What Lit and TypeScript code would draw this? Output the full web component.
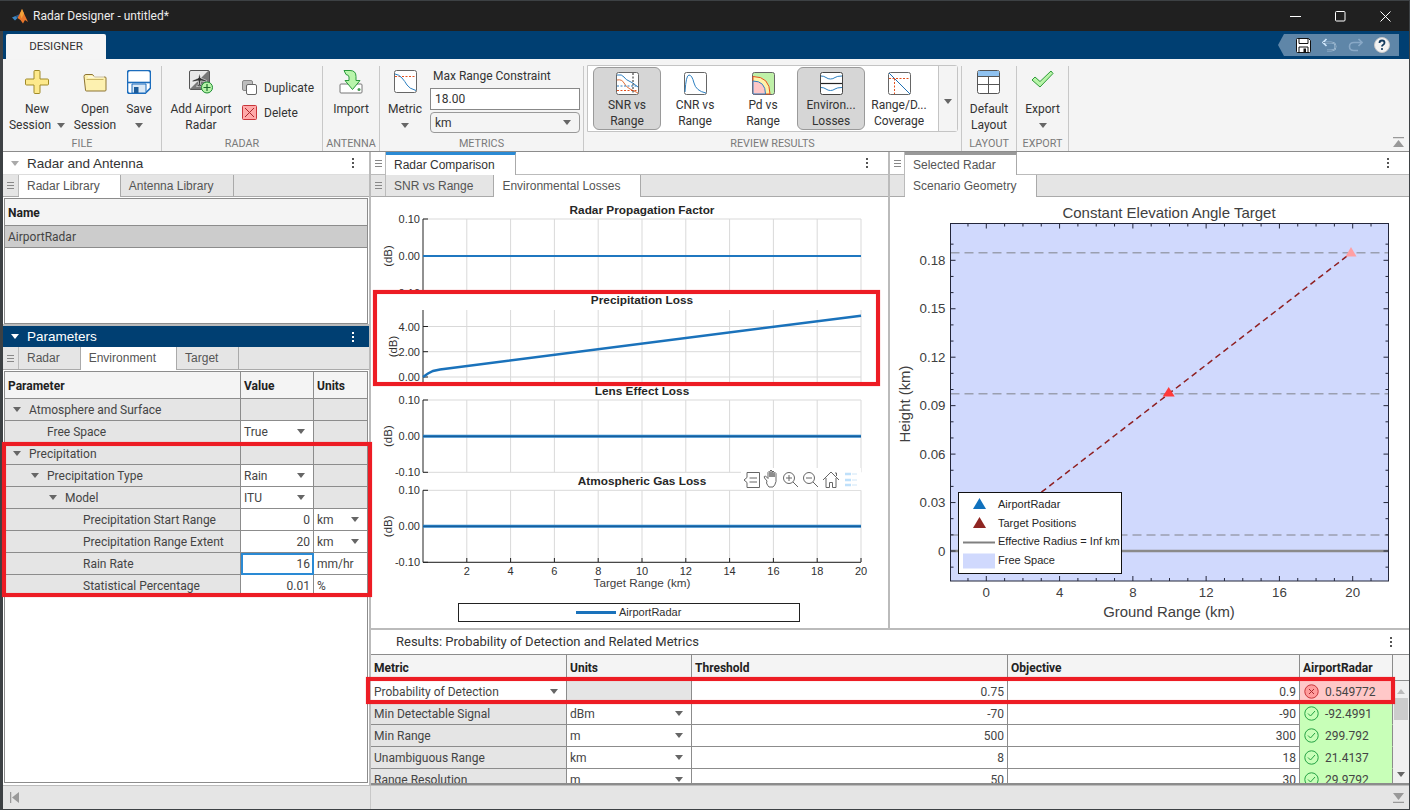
import { LitElement, html, svg, css } from 'lit';
import { customElement } from 'lit/decorators.js';

const icons = {
  plus: svg`<path d="M9 1.5q0-1 1-1h4q1 0 1 1V9h7.5q1 0 1 1v4q0 1-1 1H15v7.5q0 1-1 1h-4q-1 0-1-1V15H1.5q-1 0-1-1v-4q0-1 1-1H9z" fill="#fde98c" stroke="#a08a28"/>`,
  folder: svg`<path d="M1 6.5q0-2 2-2h6.5l2 2.5H22q1 0 1 1V20q0 1-1 1H3.500q-1 0-1-1z" fill="#fdf1b0" stroke="#8d7433"/><path d="M3.500 9.500h17" stroke="#c9b566" fill="none"/><path d="M5 7h16" stroke="#fff" fill="none"/>`,
  save: svg`<path d="M.5 3q0-2.500 2.500-2.500h18q2.500 0 2.500 2.500v15l-5.500 5.500H3q-2.500 0-2.500-2.500z" fill="#fff" stroke="#1c6dbd" stroke-width="1.600"/><path d="M1 12.500h22" stroke="#1c6dbd" stroke-width="1.600"/><path d="M5 14h14v9H5z" fill="#dbe9f6" stroke="#1c6dbd"/><path d="M7 17h4.500v6H7z" fill="#1c5b99"/>`,
  airport: svg`<rect x=".5" y=".5" width="20" height="19" rx="1.500" fill="#e8e8e8" stroke="#555"/><path d="M1 19 L19 1 H20 V19z" fill="#777"/><path d="M10.500 3l1.200 5 6 2.500v1.500l-6-1.200-.4 3.500 2 1.400v1l-2.800-.7-2.800.7v-1l2-1.400-.4-3.500-6 1.200v-1.500l6-2.500z" fill="#333" stroke="#fff" stroke-width=".6"/><circle cx="18" cy="17.500" r="5.500" fill="#b6f2a8" stroke="#1d8c34"/><path d="M18 14v7M14.500 17.500h7" stroke="#1d6c2c" stroke-width="1.200"/>`,
  dup: svg`<rect x=".5" y=".5" width="10" height="10" rx="1.500" fill="#bdbdbd" stroke="#888"/><rect x="4.500" y="4.500" width="10" height="10" rx="1.500" fill="#fff" stroke="#666"/>`,
  del: svg`<rect x=".5" y=".5" width="14" height="14" rx="1" fill="#ffa9a9" stroke="#c8353a"/><path d="M3 3l9 9M12 3l-9 9" stroke="#a92a2e"/>`,
  imp: svg`<path d="M2 14h20q1 0 1 1v7q0 1-1 1H2q-1 0-1-1v-7q0-1 1-1z" fill="#fff" stroke="#777"/><circle cx="20" cy="19.500" r="1.500" fill="#4a9a52"/><path d="M5 .5h6q6 0 6 6v4h4l-7.500 9-7.500-9h4V7q0-2-3-2.500z" fill="#b9f5ab" stroke="#2a9a3c" stroke-linejoin="round"/>`,
  metric: svg`<rect x=".5" y=".5" width="22" height="22" rx="2" fill="#fff" stroke="#666"/><path d="M1 6.500h21" stroke="#e2501e" stroke-dasharray="2 1.500"/><path d="M1 4q4 .500 7 4t5 7 9 5.500" fill="none" stroke="#2c7fc1"/>`,
  snr: svg`<rect x=".5" y=".5" width="22" height="22" rx="2" fill="#fff" stroke="#666"/><path d="M1 3q5-1 7 2t5 4 9 6" fill="none" stroke="#2c7fc1"/><path d="M1 8q5-1 7 3t6 6 8 4" fill="none" stroke="#e0703a"/><path d="M1 14h21" stroke="#2c7fc1" stroke-dasharray="2 1.500"/><path d="M1 18.500h21" stroke="#e2501e" stroke-dasharray="2 1.500"/><path d="M17 1v21" stroke="#222" stroke-dasharray="2 1.500"/>`,
  cnr: svg`<rect x=".5" y=".5" width="22" height="22" rx="2" fill="#fff" stroke="#666"/><path d="M1 20q1-17 4-17 3 0 5 8t12 10" fill="none" stroke="#2c7fc1"/>`,
  pd: svg`<rect x=".5" y=".5" width="22" height="22" rx="2" fill="#bff0a8" stroke="#666"/><path d="M1 4.500q17 0 17 17.500H1z" fill="#fff3a8" stroke="#e2501e"/><path d="M1 9q12.500 0 12.500 13H1z" fill="#ffc6c6" stroke="#2c7fc1"/>`,
  env: svg`<rect x=".5" y=".5" width="22" height="22" rx="2" fill="#fff" stroke="#444"/><path d="M1 11.500h21" stroke="#222" stroke-width="1.200"/><path d="M1 4q3 0 5 1.500t4.500 1.500 4.500-1.500 7-1.500" fill="none" stroke="#2c7fc1"/><path d="M1 15.500q3 0 5 1.500t4.500 1.500 4.500-1.500 7-1.500" fill="none" stroke="#2c7fc1"/>`,
  cov: svg`<rect x=".5" y=".5" width="22" height="22" rx="2" fill="#fff" stroke="#666"/><path d="M1 1l21 21" stroke="#1f6fb2"/><path d="M1 6.500h21M6.500 6.500V22" stroke="#e2501e" stroke-dasharray="2 1.500"/>`,
  layout: svg`<rect x=".5" y=".5" width="22" height="23" rx="2" fill="#fff" stroke="#555"/><path d="M1 1h21v5H1z" fill="#8fc2f0"/><path d="M1 6.500h21M1 14.500h21M11.500 6.500v17" stroke="#555"/>`,
  check: svg`<path d="M1 10l3-3 5 4.500L20 1l2 2.500-13 13.500z" fill="#b8f5a8" stroke="#2f9a3a" stroke-linejoin="round"/>`,
};

function icon(name: keyof typeof icons, w = 24, h = 24) {
  return html`<svg width=${w} height=${h} viewBox="0 0 ${w} ${h}">${icons[name]}</svg>`;
}

const XS = [2, 4, 6, 8, 10, 12, 14, 16, 18, 20];
const px = (v: number) => 423 + 21.9 * v;

function smallChart(title: string, titleY: number, top: number, bottom: number, labelX: number, ticks: [number, string][], line: unknown) {
  return svg`
    ${XS.map((v) => svg`<line x1=${px(v)} x2=${px(v)} y1=${top} y2=${bottom} class="grid"/>`)}
    ${ticks.map(([y]) => svg`<line x1="423" x2="861" y1=${y} y2=${y} class="grid"/>`)}
    <line x1="423" x2="423" y1=${top} y2=${bottom} class="axis"/>
    ${ticks.map(([y, t]) => svg`<line x1="423" x2="428" y1=${y} y2=${y} class="axis"/><text x="420" y=${y + 4} text-anchor="end" class="tick">${t}</text>`)}
    <text x="642" y=${titleY} text-anchor="middle" class="ctitle">${title}</text>
    <text transform="translate(${labelX} ${(top + bottom) / 2}) rotate(-90)" text-anchor="middle" class="dbl" dy="4">(dB)</text>
    ${line}
  `;
}

const flat = (y: number) => svg`<line x1="423" x2="861" y1=${y} y2=${y} stroke="#2a82c8" stroke-width="3"/><line x1="423" x2="861" y1=${y} y2=${y} stroke="#14568f" stroke-width="1"/>`;

function leftChartSvg() {
  return html`<svg class="plot" width="517" height="431" viewBox="371 197 517 431">
    ${smallChart('Radar Propagation Factor', 214, 219, 293, 388, [[219, '0.10'], [256, '0.00'], [293, '-0.10']],
      svg`<line x1="423" x2="861" y1="256" y2="256" stroke="#1f77c0" stroke-width="2"/>`)}
    <rect x="371" y="294" width="517" height="91" fill="#fff"/>
    ${smallChart('Precipitation Loss', 304, 310, 383, 393, [[326.500, '4.00'], [351.700, '2.00'], [377, '0.00']],
      svg`<path d="M423 377L428 373.500L433 371L440 369.500L861 315.700" fill="none" stroke="#1a72bb" stroke-width="2.500"/>`)}
    ${smallChart('Lens Effect Loss', 395, 400, 472.300, 388, [[400, '0.10'], [436.300, '0.00'], [472.300, '-0.10']], flat(436.300))}
    ${smallChart('Atmospheric Gas Loss', 485, 490.300, 562.300, 388, [[490.300, '0.10'], [526.300, '0.00'], [562.300, '-0.10']], flat(526.300))}
    <line x1="423" x2="861" y1="562.300" y2="562.300" class="axis"/>
    ${XS.map((v) => svg`<line x1=${px(v)} x2=${px(v)} y1="558" y2="562" class="axis"/><text x=${px(v)} y="575" text-anchor="middle" class="tick">${v}</text>`)}
    <text x="642" y="587" text-anchor="middle" class="xlab">Target Range (km)</text>
    <rect x="458.500" y="603.500" width="341" height="18" fill="#fff" stroke="#222"/>
    <line x1="576" x2="616" y1="612.500" y2="612.500" stroke="#1a72bb" stroke-width="3"/>
    <text x="619" y="616" class="tick">AirportRadar</text>
    ${axToolbar()}
  </svg>`;
}

function axToolbar() {
  return svg`<g fill="none" stroke="#666" stroke-width="1">
    <rect x="741" y="468" width="120" height="22" fill="#fff" stroke="none"/>
    <path d="M747 472.500h12.500v15H747v-5l-3-2.500 3-2.500z M749.500 478h7.500M749.500 482h7.500"/>
    <path d="M767 481l-2.500-3q-1-2 1-2l2.500 2.500v-6q1-2 2 0v4.500-6q1-2 2 0v6-5q1-2 2 0v5-3.500q1-2 2 0v8q-1 4-3 5.500h-4q-1.500-1.500-2.500-4z"/>
    <circle cx="789" cy="478" r="5.500"/><path d="M793 482l5 5M786 478h6M789 475v6"/>
    <circle cx="809" cy="478" r="5.500"/><path d="M813 482l5 5M806 478h6"/>
    <path d="M823 480l8-8 8 8M826 478v9.500h3.500v-5h3v5h3.500V478M835 473h1.500v3"/>
    <g stroke="#bfe0fa" stroke-width="2.500"><path d="M845 474h6M845 480h6M845 485h6"/></g>
    <g stroke="#cfe6f8" stroke-width="1"><path d="M852 474h5M852 480h5M852 485h5"/></g>
  </g>`;
}

const gx = (v: number) => 986.300 + 18.32 * v;
const gy = (v: number) => 551 - 1615 * v;

function geometrySvg() {
  const L = 950.500, R = 1388.500, T = 223.500, B = 581;
  const xt: unknown[] = [];
  for (let v = -1; v <= 21; v++) {
    const maj = v % 4 === 0;
    const len = maj ? 5 : 3;
    xt.push(svg`<path d="M${gx(v)} ${T}v${len}M${gx(v)} ${B}v${-len}" class="axis dk"/>`);
    if (maj) xt.push(svg`<text x=${gx(v)} y="597" text-anchor="middle" class="gtick">${v}</text>`);
  }
  const yt: unknown[] = [];
  for (let i = -1; i <= 19; i++) {
    const v = i / 100;
    const maj = i % 3 === 0 && i >= 0;
    const len = maj ? 5 : 3;
    yt.push(svg`<path d="M${L} ${gy(v)}h${len}M${R} ${gy(v)}h${-len}" class="axis dk"/>`);
    if (maj) yt.push(svg`<text x="945.500" y=${gy(v) + 4.500} text-anchor="end" class="gtick">${i === 0 ? '0' : v.toFixed(2)}</text>`);
  }
  return html`<svg class="plot" width="519" height="431" viewBox="890 197 519 431">
    <rect x=${L} y=${T} width=${R - L} height=${B - T} fill="#d0d9fd"/>
    ${[252.700, 393.700, 535].map((y) => svg`<line x1=${L} x2=${R} y1=${y} y2=${y} stroke="#9a9fb0" stroke-width="1.500" stroke-dasharray="9 5"/>`)}
    <line x1=${L} x2=${R} y1="551" y2="551" stroke="#8a8a8a" stroke-width="2.500"/>
    <line x1="986" y1="535" x2="1351" y2="253" stroke="#8f2022" stroke-width="1.500" stroke-dasharray="6 4"/>
    <path d="M1168.700 387l6 9.500h-12z" fill="#ff3a3a"/>
    <path d="M1351 247l5.500 9.500h-11z" fill="#ff9fa3"/>
    <rect x=${L} y=${T} width=${R - L} height=${B - T} fill="none" stroke="#23263a"/>
    ${xt}${yt}
    <text x="1169" y="218" text-anchor="middle" class="gtitle">Constant Elevation Angle Target</text>
    <text x="1169" y="617" text-anchor="middle" class="glab">Ground Range (km)</text>
    <text transform="translate(910 404) rotate(-90)" text-anchor="middle" class="glab">Height (km)</text>
    <rect x="958.500" y="492.500" width="163" height="81" fill="#fff" stroke="#111"/>
    <path d="M979.500 498l6.500 11h-13z" fill="#1071bd"/>
    <path d="M979.500 517l6.500 11h-13z" fill="#8f2622"/>
    <line x1="963" x2="995" y1="542.500" y2="542.500" stroke="#808080" stroke-width="2"/>
    <rect x="963" y="553.500" width="32" height="15" fill="#d0d9fd"/>
    <text x="998" y="508" class="leg">AirportRadar</text>
    <text x="998" y="527" class="leg">Target Positions</text>
    <text x="998" y="545" class="leg">Effective Radius = Inf km</text>
    <text x="998" y="564" class="leg">Free Space</text>
  </svg>`;
}

const paramRows: { l: number; name: string; open?: boolean; val?: string; drop?: boolean; num?: boolean; unit?: string; unitDrop?: boolean; focus?: boolean }[] = [
  { l: 0, name: 'Atmosphere and Surface', open: true },
  { l: 1, name: 'Free Space', val: 'True', drop: true },
  { l: 0, name: 'Precipitation', open: true },
  { l: 1, name: 'Precipitation Type', open: true, val: 'Rain', drop: true },
  { l: 2, name: 'Model', open: true, val: 'ITU', drop: true },
  { l: 3, name: 'Precipitation Start Range', val: '0', num: true, unit: 'km', unitDrop: true },
  { l: 3, name: 'Precipitation Range Extent', val: '20', num: true, unit: 'km', unitDrop: true },
  { l: 3, name: 'Rain Rate', val: '16', num: true, unit: 'mm/hr', focus: true },
  { l: 3, name: 'Statistical Percentage', val: '0.01', num: true, unit: '%' },
];

const metricRows = [
  { m: 'Probability of Detection', u: '', th: '0.75', ob: '0.9', res: '0.549772', ok: false, first: true },
  { m: 'Min Detectable Signal', u: 'dBm', th: '-70', ob: '-90', res: '-92.4991', ok: true },
  { m: 'Min Range', u: 'm', th: '500', ob: '300', res: '299.792', ok: true },
  { m: 'Unambiguous Range', u: 'km', th: '8', ob: '18', res: '21.4137', ok: true },
  { m: 'Range Resolution', u: 'm', th: '50', ob: '30', res: '29.9792', ok: true },
];

@customElement('app-root')
export class AppRoot extends LitElement {
  static styles = css`
    :host {
      display: block;
      position: relative;
      width: 1410px;
      height: 810px;
      overflow: hidden;
      font-family: Roboto, "Liberation Sans", sans-serif;
      font-size: 12px;
      color: #444;
    }
    * { box-sizing: border-box; }
    .win {
      width: 1410px;
      height: 810px;
      display: flex;
      flex-direction: column;
      background: #e5e5e5;
      border: solid #3d4144;
      border-width: 1px 1px 1px 3px;
    }
    .titlebar {
      height: 30px;
      flex: none;
      margin-left: -3px;
      padding-left: 12px;
      background: #202020;
      color: #ececec;
      display: flex;
      align-items: center;
      gap: 5px;
      font-size: 12px;
    }
    .winbtns { margin-left: auto; display: flex; align-items: center; padding-right: 1px; }
    .winbtns span { width: 45px; height: 30px; display: flex; align-items: center; justify-content: center; }
    .strip {
      height: 28px;
      flex: none;
      background: #003f72;
      display: flex;
      padding: 3px 10px 0 3px;
      justify-content: space-between;
    }
    .dtab {
      width: 100px;
      background: #f5f5f5;
      border-radius: 2px 2px 0 0;
      text-align: center;
      line-height: 25px;
      color: #333;
      font-size: 11.500px;
    }
    .qab {
      width: 121px;
      height: 22px;
      background: #5f86a8;
      clip-path: polygon(6px 0, 100% 0, 100% 100%, 6px 100%, 0 50%);
      display: flex;
      align-items: center;
      padding-left: 18px;
      gap: 11px;
    }
    .ribbon {
      height: 93px;
      flex: none;
      background: #f4f4f4;
      border-bottom: 1px solid #8c8c8c;
      display: flex;
      position: relative;
    }
    .sec {
      margin-top: 7px;
      height: 85px;
      display: flex;
      flex-direction: column;
      border-right: 1px solid #c8c8c8;
    }
    .sec-body { display: flex; height: 71px; flex: none; }
    .sec-label {
      text-align: center;
      color: #7a7a7a;
      line-height: 14px;
      height: 14px;
      font-size: 10.800px;
      white-space: nowrap;
    }
    .s-file { width: 159px; }
    .s-file .sec-body { padding-left: 2px; }
    .s-radar { width: 161px; }
    .s-ant { width: 57px; }
    .s-met { width: 204px; }
    .s-rev { width: 378px; }
    .s-lay { width: 55px; }
    .s-exp { width: 52px; }
    .rb {
      display: flex;
      flex-direction: column;
      align-items: center;
      color: #333;
      line-height: 16px;
      text-align: center;
      white-space: nowrap;
      flex: none;
    }
    .rb .ic { height: 35px; display: flex; align-items: flex-start; justify-content: center; padding-top: 4px; }
    .w-new { width: 64px; }
    .w-open { width: 52px; }
    .w-save { width: 36px; }
    .w-add { width: 78px; }
    .w-imp { width: 56px; }
    .w-met { width: 50px; }
    .w-lay { width: 54px; }
    .w-exp { width: 51px; }
    .caret {
      display: inline-block;
      width: 0;
      height: 0;
      border: solid transparent;
      border-width: 5px 4px 0;
      border-top-color: #666;
      vertical-align: 1px;
    }
    .smalls { display: flex; flex-direction: column; padding: 9px 0 0 2px; }
    .small { height: 25px; display: flex; align-items: center; gap: 7px; color: #333; }
    .small svg { flex: none; }
    .metcol { width: 150px; }
    .metcol label { display: block; height: 22px; line-height: 20px; padding-left: 3px; color: #333; }
    .inp {
      height: 22px;
      border: 1px solid #888;
      background: #fff;
      padding-left: 4px;
      line-height: 20px;
      color: #333;
    }
    .sel {
      margin-top: 2px;
      height: 21px;
      border: 1px solid #999;
      border-radius: 4px;
      background: #f4f4f4;
      padding: 0 8px 0 4px;
      display: flex;
      align-items: center;
      justify-content: space-between;
      color: #333;
    }
    .gallery {
      margin: -1px 0 0 3px;
      width: 371px;
      height: 67px;
      border: 1px solid #c4c4c4;
      border-radius: 0 3px 3px 0;
      background: #fff;
      display: flex;
      padding: 1px 0 0 5px;
    }
    .gi {
      width: 68px;
      height: 63px;
      display: flex;
      flex-direction: column;
      align-items: center;
      padding-top: 5px;
      line-height: 16px;
      color: #333;
      text-align: center;
      border-radius: 6px;
      white-space: nowrap;
    }
    .gi svg { margin-bottom: 2px; flex: none; }
    .gi.on { background: #d6d6d6; border: 1px solid #9a9a9a; padding-top: 4px; }
    .gmore {
      margin-left: auto;
      width: 19px;
      border-left: 1px solid #c4c4c4;
      background: #f4f4f4;
      margin-top: -1px;
      text-align: center;
      padding-top: 28px;
    }
    .collapse { position: absolute; right: 4px; bottom: 2px; }
    .main { flex: none; height: 633px; display: flex; min-height: 0; }
    .left { width: 366px; flex: none; display: flex; flex-direction: column; background: #fff; }
    .vsplit { width: 2px; flex: none; background: #bbb; }
    .rightall { flex: 1; display: flex; flex-direction: column; min-width: 0; }
    .tops { height: 476px; flex: none; display: flex; }
    .hsplit { height: 2px; flex: none; background: #bbb; }
    .doc { display: flex; flex-direction: column; background: #fff; }
    .d-c { width: 517px; }
    .d-r { width: 519px; }
    .ptitle {
      height: 23px;
      flex: none;
      display: flex;
      align-items: center;
      background: #fff;
      color: #333;
      font: 13.500px "Liberation Sans", sans-serif;
      padding: 0 15px 0 8px;
      justify-content: space-between;
      border-bottom: 1px solid #ddd;
    }
    .ptitle .nm { display: flex; align-items: center; gap: 8px; }
    .ptitle .caret { border-top-color: #aaa; }
    .ptitle.active { background: #003f72; color: #fff; border: 0; height: 21px; }
    .ptitle.active .caret { border-top-color: #fff; }
    .dots { width: 2px; height: 10px; background: repeating-linear-gradient(#555 0 2px, transparent 2px 4px); }
    .active .dots { background: repeating-linear-gradient(#fff 0 2px, transparent 2px 4px); }
    .tabs {
      height: 22px;
      flex: none;
      display: flex;
      background: #e5e5e5;
      font: 12px "Liberation Sans", sans-serif;
      color: #555;
      border-bottom: 1px solid #aaa;
    }
    .tabs.param { height: 23px; }
    .gripc { width: 16px; flex: none; display: flex; align-items: center; justify-content: center; border-right: 1px solid #bbb; }
    .grip { width: 7px; height: 7px; background: repeating-linear-gradient(#888 0 1px, transparent 1px 3px); }
    .tab { padding: 0 20px 0 8px; line-height: 22px; border-right: 1px solid #aaa; white-space: nowrap; }
    .tab.on { background: #fff; height: 22px; }
    .tabs.param .tab { line-height: 23px; }
    .tabs.param .tab.on { height: 23px; }
    .tabs.doc-top { height: 23px; background: #fff; border-bottom: 1px solid #bbb; }
    .doc-top .gripc { width: 15px; }
    .doc-top .tab { height: 23px; line-height: 20px; border-top: 3px solid #2a8ad4; background: #fff; color: #333; }
    .doc-top .tab.off { border-top-color: #999; color: #555; }
    .doc-top .dotc { margin-left: auto; padding: 6px 20px 0 0; }
    .sub .gripc { width: 15px; }
    .tbl { display: grid; grid-auto-rows: 22px; }
    .lib {
      margin: 1px 1px 0;
      height: 126px;
      flex: none;
      border: 1px solid #8c8c8c;
      grid-template-columns: 1fr;
      grid-template-rows: 27px;
      align-content: start;
      background: #fff;
    }
    .param-t {
      margin: 1px 1px 2px;
      flex: 1;
      border: 1px solid #8c8c8c;
      grid-template-columns: 236px 73px 53px;
      grid-template-rows: 27px;
      background: #fff;
      align-content: start;
    }
    .c {
      display: flex;
      align-items: center;
      border: solid #8c8c8c;
      border-width: 0 1px 1px 0;
      background: #e5e5e5;
      padding: 0 3px;
      white-space: nowrap;
      overflow: hidden;
      color: #444;
    }
    .c.h { background: #f4f4f4; font-weight: 700; color: #222; padding-top: 1px; }
    .c.w { background: #fff; }
    .c.r { justify-content: flex-end; }
    .c.sb { justify-content: space-between; padding-right: 8px; }
    .c.sel-row { background: #ccc; height: 22px; }
    .c.foc { border: 2px solid #2a8ad4; padding-right: 2px; }
    .c.tree { gap: 8px; }
    .c.nr { border-right: 0; }
    .lsplit { height: 2px; flex: none; background: #bbb; }
    .plot { display: block; }
    .plot text { font-family: "Liberation Sans", sans-serif; }
    .grid { stroke: #d9d9d9; stroke-width: 1; }
    .axis { stroke: #222; stroke-width: 1; fill: none; }
    .axis.dk { stroke: #23263a; }
    .tick { font-size: 11px; fill: #303030; }
    .dbl { font-size: 11.500px; fill: #303030; }
    .ctitle { font-size: 11.800px; font-weight: 700; fill: #262626; }
    .xlab { font-size: 11.700px; fill: #404040; }
    .gtick { font-size: 13.300px; fill: #404040; }
    .gtitle { font-size: 15px; fill: #404040; }
    .glab { font-size: 14.900px; fill: #404040; }
    .leg { font-size: 11px; fill: #262626; }
    .results { height: 155px; flex: none; background: #fff; display: flex; flex-direction: column; overflow: hidden; border-bottom: 2px solid #8c8c8c; }
    .rtitle {
      height: 24px;
      flex: none;
      display: flex;
      align-items: center;
      justify-content: space-between;
      padding: 0 17px 1px 25px;
      color: #333;
      font-size: 13px;
    }
    .rt-wrap { display: flex; flex: 1; min-height: 0; overflow: hidden; border-top: 1px solid #8c8c8c; margin-left: -1px; position: relative; }
    .rtable {
      flex: none;
      align-content: start;
      grid-template-columns: 196px 125px 316px 292px 93px;
      grid-template-rows: 26px;
      border-left: 1px solid #8c8c8c;
    }
    .rbar { width: 16px; flex: none; display: flex; flex-direction: column; background: #f0f0f0; align-items: center; }
    .rbar .hd { height: 26px; width: 100%; background: #f4f4f4; border-bottom: 1px solid #8c8c8c; flex: none; }
    .rbar .up { margin-top: 8px; border: solid transparent; border-width: 0 4px 5px; border-bottom-color: #bbb; }
    .rbar .thumb { margin-top: 4px; width: 14px; height: 22px; background: #ccc; }
    .rbar .down { margin-top: auto; margin-bottom: 6px; border: solid transparent; border-width: 5px 4px 0; border-top-color: #666; }
    .res { gap: 6px; padding-left: 4px; border-bottom-color: #c8ffb8; }
    .res.ok { background: #c8ffb8; }
    .res.bad { background: #ffc8c8; border-bottom-color: #8c8c8c; }
    .status {
      flex: 1;
      min-height: 0;
      display: flex;
      background: #e5e5e5;
      border-top: 1px solid #bbb;
      position: relative;
    }
    .status .l { width: 368px; border-right: 1px solid #c8c8c8; padding: 6px 0 0 7px; }
    .status .r { margin-left: auto; padding: 5px 4px 0 0; }
    .hl {
      position: absolute;
      border: 4px solid #ed1c24;
      box-shadow: 0 0 1px #ed1c2488, inset 0 0 1px #ed1c2488;
      pointer-events: none;
    }
    .hl-a { left: 2px; top: 442px; width: 370px; height: 155px; }
    .hl-b { left: 373px; top: 290px; width: 507px; height: 96px; }
    .hl-c { left: 366px; top: 677px; width: 1029px; height: 27px; }
  `;

  private btn(cls: string, ic: unknown, l1: string, l2: unknown) {
    return html`<div class="rb ${cls}"><div class="ic">${ic}</div><div>${l1}</div><div>${l2}</div></div>`;
  }

  private ribbon() {
    const gal: [keyof typeof icons, string, string, boolean][] = [
      ['snr', 'SNR vs', 'Range', true],
      ['cnr', 'CNR vs', 'Range', false],
      ['pd', 'Pd vs', 'Range', false],
      ['env', 'Environ...', 'Losses', true],
      ['cov', 'Range/D...', 'Coverage', false],
    ];
    const caret = html`<span class="caret"></span>`;
    return html`<div class="ribbon">
      <div class="sec s-file">
        <div class="sec-body">
          ${this.btn('w-new', icon('plus'), 'New', html`Session&nbsp; ${caret}`)}
          ${this.btn('w-open', icon('folder'), 'Open', 'Session')}
          ${this.btn('w-save', icon('save'), 'Save', caret)}
        </div>
        <div class="sec-label">FILE</div>
      </div>
      <div class="sec s-radar">
        <div class="sec-body">
          ${this.btn('w-add', icon('airport'), 'Add Airport', 'Radar')}
          <div class="smalls">
            <div class="small">${icon('dup', 15, 15)} Duplicate</div>
            <div class="small">${icon('del', 15, 15)} Delete</div>
          </div>
        </div>
        <div class="sec-label">RADAR</div>
      </div>
      <div class="sec s-ant">
        <div class="sec-body">${this.btn('w-imp', icon('imp'), 'Import', '')}</div>
        <div class="sec-label">ANTENNA</div>
      </div>
      <div class="sec s-met">
        <div class="sec-body">
          ${this.btn('w-met', icon('metric', 23, 23), 'Metric', caret)}
          <div class="metcol">
            <label>Max Range Constraint</label>
            <div class="inp">18.00</div>
            <div class="sel">km ${caret}</div>
          </div>
        </div>
        <div class="sec-label">METRICS</div>
      </div>
      <div class="sec s-rev">
        <div class="sec-body">
          <div class="gallery">
            ${gal.map(([ic, a, b, on]) => html`<div class="gi ${on ? 'on' : ''}">${icon(ic, 23, 23)}<div>${a}</div><div>${b}</div></div>`)}
            <div class="gmore">${caret}</div>
          </div>
        </div>
        <div class="sec-label">REVIEW RESULTS</div>
      </div>
      <div class="sec s-lay">
        <div class="sec-body">${this.btn('w-lay', icon('layout'), 'Default', 'Layout')}</div>
        <div class="sec-label">LAYOUT</div>
      </div>
      <div class="sec s-exp">
        <div class="sec-body">${this.btn('w-exp', icon('check'), 'Export', caret)}</div>
        <div class="sec-label">EXPORT</div>
      </div>
      <svg class="collapse" width="12" height="12" viewBox="0 0 12 12"><path d="M0 .5h11" stroke="#999" stroke-width="1.500"/><path d="M5.500 3L11 10H0z" fill="#999"/></svg>
    </div>`;
  }

  private leftPanel() {
    const caret = html`<span class="caret"></span>`;
    return html`<div class="left">
      <div class="ptitle"><span class="nm">${caret} Radar and Antenna</span><span class="dots"></span></div>
      <div class="tabs"><div class="gripc"><span class="grip"></span></div><div class="tab on">Radar Library</div><div class="tab">Antenna Library</div></div>
      <div class="tbl lib">
        <div class="c h nr">Name</div>
        <div class="c sel-row nr">AirportRadar</div>
      </div>
      <div class="lsplit"></div>
      <div class="ptitle active"><span class="nm">${caret} Parameters</span><span class="dots"></span></div>
      <div class="tabs param"><div class="gripc"><span class="grip"></span></div><div class="tab">Radar</div><div class="tab on">Environment</div><div class="tab">Target</div></div>
      <div class="tbl param-t">
        <div class="c h">Parameter</div><div class="c h">Value</div><div class="c h nr">Units</div>
        ${paramRows.map((r) => html`
          <div class="c tree" style="padding-left:${8 + 18 * r.l + (r.open ? 0 : 16)}px">${r.open ? caret : ''}<span>${r.name}</span></div>
          ${r.val === undefined
            ? html`<div class="c"></div>`
            : r.drop
              ? html`<div class="c w sb"><span>${r.val}</span>${caret}</div>`
              : html`<div class="c w r ${r.focus ? 'foc' : ''}">${r.val}</div>`}
          ${r.unit
            ? html`<div class="c w nr ${r.unitDrop ? 'sb' : ''}"><span>${r.unit}</span>${r.unitDrop ? caret : ''}</div>`
            : html`<div class="c nr"></div>`}
        `)}
      </div>
    </div>`;
  }

  private results() {
    const caret = html`<span class="caret"></span>`;
    return html`<div class="results">
      <div class="rtitle"><span>Results: Probability of Detection and Related Metrics</span><span class="dots"></span></div>
      <div class="rt-wrap">
        <div class="tbl rtable">
          ${['Metric', 'Units', 'Threshold', 'Objective', 'AirportRadar'].map((h) => html`<div class="c h">${h}</div>`)}
          ${metricRows.map((r) => html`
            <div class="c sb ${r.first ? 'w' : ''}"><span>${r.m}</span>${r.first ? caret : ''}</div>
            ${r.u ? html`<div class="c w sb"><span>${r.u}</span>${caret}</div>` : html`<div class="c"></div>`}
            <div class="c w r">${r.th}</div>
            <div class="c w r">${r.ob}</div>
            <div class="c res ${r.ok ? 'ok' : 'bad'}">
              ${r.ok
                ? html`<svg width="15" height="15" viewBox="0 0 15 15"><circle cx="7.500" cy="7.500" r="6.700" fill="none" stroke="#25a244"/><path d="M4 7.500l2.500 2.500 4.500-5" fill="none" stroke="#25a244"/></svg>`
                : html`<svg width="15" height="15" viewBox="0 0 15 15"><circle cx="7.500" cy="7.500" r="6.700" fill="#ff9c9c" stroke="#c8353a"/><path d="M5 5l5 5M10 5l-5 5" stroke="#a92a2e"/></svg>`}
              <span>${r.res}</span>
            </div>
          `)}
        </div>
        <div class="rbar"><div class="hd"></div><div class="up"></div><div class="thumb"></div><div class="down"></div></div>
      </div>
    </div>`;
  }

  render() {
    return html`
      <div class="win">
        <div class="titlebar">
          <svg width="16" height="16" viewBox="0 0 16 16">
            <path d="M0 9.500l3.500-1.500 2 2-2.500 2.500z" fill="#3d87c4"/>
            <path d="M3.500 8L8 6l-2.500 4z" fill="#2d5f94"/>
            <path d="M5.500 10L10 1l2 4.500 4 8.500-3-2-2 3.500q-2-4-5.500-5.500z" fill="#e8762b"/>
            <path d="M10 1l2 4.500-2.500 5L8 6z" fill="#f2a33a"/>
          </svg>
          <span>Radar Designer - untitled*</span>
          <div class="winbtns">
            <span><svg width="11" height="11" viewBox="0 0 11 11"><path d="M0 5.500h11" stroke="#fff"/></svg></span>
            <span><svg width="11" height="11" viewBox="0 0 11 11"><rect x=".5" y=".5" width="9.500" height="9.500" rx="1" fill="none" stroke="#fff"/></svg></span>
            <span><svg width="11" height="11" viewBox="0 0 11 11"><path d="M.5.5l10 10M10.500.5l-10 10" stroke="#fff"/></svg></span>
          </div>
        </div>
        <div class="strip">
          <div class="dtab">DESIGNER</div>
          <div class="qab">
            <svg width="15" height="15" viewBox="0 0 15 15"><path d="M.5 1.500q0-1 1-1h11l2 2v11q0 1-1 1h-12q-1 0-1-1z" fill="#fff" stroke="#111"/><path d="M3 .5v5h9v-5M3 14.500V9h9v5.500" fill="none" stroke="#111"/><path d="M7.500 10.500h2.500v4H7.500z" fill="#111"/></svg>
            <svg width="15" height="15" viewBox="0 0 15 15"><path d="M1 4.500h8q4.500 0 4.500 4t-4.500 4H5M4.500 1L1 4.500 4.500 8" fill="none" stroke="#cfe6fa" stroke-width="1.600"/><path d="M1 4.500h8q4.500 0 4.500 4t-4.500 4H5" fill="none" stroke="#123a5e" stroke-width=".5"/></svg>
            <svg width="15" height="15" viewBox="0 0 15 15"><path d="M14 4.500H6q-4.500 0-4.500 4t4.500 4h4M10.500 1L14 4.500 10.500 8" fill="none" stroke="#88a8c6" stroke-width="1.600"/></svg>
            <svg width="16" height="16" viewBox="0 0 16 16"><circle cx="8" cy="8" r="7.500" fill="#f2f2f2" stroke="#c8c8c8"/><path d="M5.500 6q0-2.500 2.500-2.500T10.500 5.800q0 1.200-1.300 2T8 9.500" fill="none" stroke="#123a5e" stroke-width="1.800"/><circle cx="8" cy="12" r="1.100" fill="#123a5e"/></svg>
          </div>
        </div>
        ${this.ribbon()}
        <div class="main">
          ${this.leftPanel()}
          <div class="vsplit"></div>
          <div class="rightall">
            <div class="tops">
              <div class="doc d-c">
                <div class="tabs doc-top"><div class="gripc"><span class="grip"></span></div><div class="tab">Radar Comparison</div><div class="dotc"><div class="dots"></div></div></div>
                <div class="tabs sub"><div class="gripc"><span class="grip"></span></div><div class="tab">SNR vs Range</div><div class="tab on">Environmental Losses</div></div>
                ${leftChartSvg()}
              </div>
              <div class="vsplit"></div>
              <div class="doc d-r">
                <div class="tabs doc-top"><div class="gripc"><span class="grip"></span></div><div class="tab off">Selected Radar</div><div class="dotc"><div class="dots"></div></div></div>
                <div class="tabs sub"><div class="gripc"></div><div class="tab on">Scenario Geometry</div></div>
                ${geometrySvg()}
              </div>
            </div>
            <div class="hsplit"></div>
            ${this.results()}
          </div>
        </div>
        <div class="status">
          <div class="l"><svg width="10" height="11" viewBox="0 0 10 11"><path d="M.5 0v11" stroke="#999" stroke-width="1.500"/><path d="M9 0v11L2 5.500z" fill="#999"/></svg></div>
          <div class="r"><svg width="12" height="12" viewBox="0 0 12 12"><path d="M0 11.500h11" stroke="#999" stroke-width="1.500"/><path d="M5.500 9L11 2H0z" fill="#999"/></svg></div>
        </div>
      </div>
      <div class="hl hl-a"></div>
      <div class="hl hl-b"></div>
      <div class="hl hl-c"></div>
    `;
  }
}
